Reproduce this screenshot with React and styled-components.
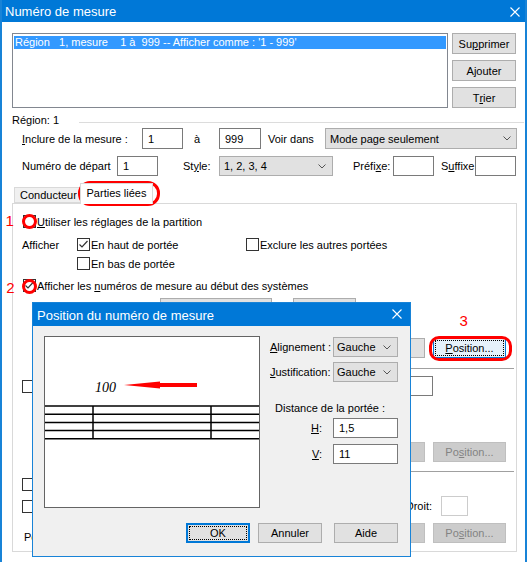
import React from 'react';
import styled, { createGlobalStyle, css } from 'styled-components';

const BLUE = '#0078d7';
const RED = '#ff0000';

const GlobalStyle = createGlobalStyle`
  html, body { margin: 0; padding: 0; background: #fff; }
  body { font-family: "Liberation Sans", Arial, sans-serif; font-size: 11px; color: #000; }
  * { box-sizing: border-box; }
  u { text-decoration-thickness: 1px; text-underline-offset: 1px; }
`;

const Window = styled.div`
  position: relative;
  width: 527px;
  height: 562px;
  border-left: 2px solid #1883d7;
  border-right: 2px solid #1883d7;
  background: #fff;
  overflow: hidden;
`;

const TitleBar = styled.div`
  height: ${p => p.$h}px;
  background: ${BLUE};
  color: #fff;
  font-size: 13px;
  line-height: ${p => p.$h - 2}px;
  padding: 2px 0 0 ${p => p.$pl}px;
  display: flex;
  justify-content: space-between;
  align-items: flex-start;
`;

const CloseBtn = styled.svg`
  margin: ${p => p.$mt}px ${p => p.$mr}px 0 0;
  flex-shrink: 0;
`;

function CloseX({ mt, mr }) {
  return (
    <CloseBtn $mt={mt} $mr={mr} width="10" height="10" viewBox="0 0 10 10">
      <path d="M0.5 0.5 L9.5 9.5 M9.5 0.5 L0.5 9.5" stroke="#fff" strokeWidth="1.1" />
    </CloseBtn>
  );
}

const Body = styled.div`
  padding: 11px 1px 0 10px;
`;

const ListRow = styled.div`
  display: flex;
  gap: 4px;
  height: 75px;
`;

const ListBox = styled.div`
  width: 436px;
  height: 75px;
  border: 1px solid #828790;
  padding: 2px 1px;
`;

const SelectedItem = styled.div`
  background: #3399ff;
  color: #fff;
  height: 13px;
  line-height: 13px;
  padding-left: 1px;
  white-space: pre;
`;

const ButtonColumn = styled.div`
  display: flex;
  flex-direction: column;
  gap: 6px;
`;

const Btn = styled.div`
  position: relative;
  width: ${p => p.$w}px;
  height: ${p => p.$h || 20}px;
  margin-left: ${p => p.$ml || 0}px;
  flex-shrink: 0;
  display: flex;
  align-items: center;
  justify-content: center;
  background: #e1e1e1;
  border: 1px solid #adadad;
  white-space: nowrap;
  ${p => p.$disabled && css`
    background: #cccccc;
    border-color: #bfbfbf;
    color: #838383;
  `}
  ${p => p.$focus && css`
    background: #e5f1fb;
    border-color: ${BLUE};
    &::after {
      content: '';
      position: absolute;
      inset: 1px;
      border: 1px dotted #000;
    }
  `}
  ${p => p.$default && css`
    border: 2px solid ${BLUE};
    &::after {
      content: '';
      position: absolute;
      inset: 1px;
      border: 1px dotted #000;
    }
  `}
`;

const RegionHeader = styled.div`
  margin-top: 5px;
  height: 14px;
  line-height: 14px;
  display: flex;
`;

const HeaderRule = styled.div`
  flex: 1;
  height: 1px;
  margin: 9px 0 0 20px;
  background: #dcdcdc;
`;

const FormRow = styled.div`
  display: flex;
  align-items: center;
  margin-top: ${p => p.$mt}px;
  height: ${p => p.$h}px;
  padding-left: ${p => p.$pl ?? 10}px;
`;

const Label = styled.span`
  display: inline-block;
  width: ${p => (p.$w ? `${p.$w}px` : 'auto')};
  margin-left: ${p => p.$ml || 0}px;
  margin-top: ${p => p.$mt || 0}px;
  flex-shrink: 0;
  white-space: nowrap;
  text-align: ${p => p.$align || 'left'};
  padding-right: ${p => p.$pr || 0}px;
  color: ${p => (p.$disabled ? '#838383' : 'inherit')};
`;

const TextBox = styled.div`
  width: ${p => p.$w}px;
  height: ${p => p.$h || 21}px;
  margin-left: ${p => p.$ml || 0}px;
  flex-shrink: 0;
  background: #fff;
  border: 1px solid ${p => (p.$disabled ? '#cccccc' : '#7a7a7a')};
  padding-left: 5px;
  display: flex;
  align-items: center;
`;

const ComboBox = styled.div`
  width: ${p => p.$w}px;
  height: ${p => p.$h || 21}px;
  flex-shrink: 0;
  background: #e1e1e1;
  border: 1px solid #adadad;
  display: flex;
  align-items: center;
  justify-content: space-between;
  padding: 0 ${p => p.$pr || 6}px 0 ${p => p.$pl || 4}px;
`;

function Combo({ w, h, pl, pr, children }) {
  return (
    <ComboBox $w={w} $h={h} $pl={pl} $pr={pr}>
      <span>{children}</span>
      <svg width="8" height="5" viewBox="0 0 8 5">
        <polyline points="0.5,0.5 4,4 7.5,0.5" fill="none" stroke="#555" strokeWidth="1" />
      </svg>
    </ComboBox>
  );
}

const CheckBox = styled.span`
  display: inline-flex;
  align-items: center;
  justify-content: center;
  width: 13px;
  height: 13px;
  margin-left: ${p => p.$ml || 0}px;
  flex-shrink: 0;
  border: 1px solid #333;
  background: #fff;
`;

function Check({ checked, ml }) {
  return (
    <CheckBox $ml={ml}>
      {checked && (
        <svg width="11" height="11" viewBox="0 0 11 11">
          <polyline points="1.5,5.5 4,8 9.5,2" fill="none" stroke="#333" strokeWidth="1.2" />
        </svg>
      )}
    </CheckBox>
  );
}

const CheckOption = styled.span`
  display: inline-flex;
  align-items: center;
  gap: 1px;
  width: ${p => (p.$w ? `${p.$w}px` : 'auto')};
  margin-left: ${p => p.$ml || 0}px;
  white-space: nowrap;
  flex-shrink: 0;
`;

const TabStrip = styled.div`
  display: flex;
  align-items: flex-end;
  height: 20px;
  margin-top: 7px;
  padding-left: 2px;
`;

const Tab = styled.div`
  position: relative;
  width: ${p => p.$w}px;
  height: ${p => (p.$active ? 21 : 16)}px;
  margin-left: ${p => p.$ml || 0}px;
  margin-bottom: ${p => (p.$active ? -1 : 0)}px;
  z-index: ${p => (p.$active ? 1 : 0)};
  background: ${p => (p.$active ? '#fff' : '#f0f0f0')};
  border: 1px solid #d9d9d9;
  border-bottom: ${p => (p.$active ? 'none' : '1px solid #d9d9d9')};
  display: flex;
  align-items: center;
  justify-content: ${p => (p.$active ? 'center' : 'flex-start')};
  padding-left: ${p => (p.$active ? 0 : 5)}px;
  padding-bottom: ${p => (p.$active ? 2 : 0)}px;
`;

const TabPanel = styled.div`
  width: 505px;
  height: 349px;
  border: 1px solid #d9d9d9;
  padding: 11px 0 0 9px;
`;

const PanelRow = styled.div`
  display: flex;
  align-items: center;
  margin-top: ${p => p.$mt || 0}px;
  height: ${p => p.$h}px;
`;

const RightGroup = styled.div`
  margin-left: auto;
  margin-right: ${p => p.$mr}px;
  display: flex;
  align-items: center;
`;

const Separator = styled.div`
  height: 1px;
  margin: ${p => p.$mt}px 2px 0 18px;
  background: #a0a0a0;
`;

/* overlays */
const Digit = styled.span`
  position: absolute;
  left: ${p => p.$x}px;
  top: ${p => p.$y}px;
  color: ${RED};
  font-size: 15px;
  line-height: 15px;
`;

const Ring = styled.div`
  position: absolute;
  left: ${p => p.$x}px;
  top: ${p => p.$y}px;
  width: ${p => p.$w}px;
  height: ${p => p.$h}px;
  border: 3px solid ${RED};
  border-radius: ${p => p.$r}px;
  pointer-events: none;
`;

/* dialog */
const Dialog = styled.div`
  position: absolute;
  left: 30px;
  top: 302px;
  width: 379px;
  height: 255px;
  border: 1px solid #1883d7;
  background: #f0f0f0;
  z-index: 5;
`;

const DialogBody = styled.div`
  padding: 10px 12px 0 11px;
`;

const DialogMain = styled.div`
  display: flex;
  gap: 10px;
`;

const Preview = styled.div`
  width: 216px;
  height: 172px;
  border: 1px solid #646464;
  background: #fff;
  flex-shrink: 0;
`;

const SideForm = styled.div`
  width: 128px;
  display: flex;
  flex-direction: column;
`;

const SideRow = styled.div`
  display: flex;
  align-items: center;
  margin-top: ${p => p.$mt}px;
  height: ${p => p.$h}px;
  padding-left: ${p => p.$pl || 0}px;
`;

const DialogButtons = styled.div`
  display: flex;
  justify-content: flex-end;
  margin-top: 15px;
  height: 20px;
`;

function StaffPreview() {
  const ys = [69, 77.3, 85.4, 93.6, 101.7];
  return (
    <svg width="214" height="170" viewBox="0 0 214 170" style={{ display: 'block' }}>
      <text x="50" y="55" fontFamily="Liberation Serif, serif" fontStyle="italic" fontSize="14">100</text>
      <polygon points="79,48 115,44.5 115,46 152,46 152,50 115,50 115,51.5" fill={RED} />
      {ys.map(y => (
        <line key={y} x1="0" y1={y} x2="214" y2={y} stroke="#000" strokeWidth="1.5" />
      ))}
      <line x1="48" y1="69" x2="48" y2="101.7" stroke="#000" strokeWidth="1.5" />
      <line x1="166" y1="69" x2="166" y2="101.7" stroke="#000" strokeWidth="1.5" />
    </svg>
  );
}

export default function App() {
  return (
    <>
      <GlobalStyle />
      <Window>
        <TitleBar $h={22} $pl={3}>
          <span>Numéro de mesure</span>
          <CloseX mt={5} mr={5} />
        </TitleBar>
        <Body>
          <ListRow>
            <ListBox>
              <SelectedItem>{"Région   1, mesure    1 à  999 -- Afficher comme : '1 - 999'"}</SelectedItem>
            </ListBox>
            <ButtonColumn>
              <Btn $w={64} $h={21}>Su<u>p</u>primer</Btn>
              <Btn $w={64} $h={21}>A<u>j</u>outer</Btn>
              <Btn $w={64} $h={21}>T<u>r</u>ier</Btn>
            </ButtonColumn>
          </ListRow>

          <RegionHeader>
            <span>Région: 1</span>
            <HeaderRule />
          </RegionHeader>

          <FormRow $mt={1} $h={21}>
            <Label $w={120}><u>I</u>nclure de la mesure :</Label>
            <TextBox $w={41}>1</TextBox>
            <Label $w={25} $ml={11}>à</Label>
            <TextBox $w={42}>999</TextBox>
            <Label $w={57} $ml={7}>Voir dans</Label>
            <Combo w={192} pr={5}>Mode page seulement</Combo>
          </FormRow>

          <FormRow $mt={7} $h={20}>
            <Label $w={95}>Numéro de départ</Label>
            <TextBox $w={41} $h={20}>1</TextBox>
            <Label $w={36} $ml={25}>St<u>y</u>le:</Label>
            <Combo w={114} h={20}>1, 2, 3, 4</Combo>
            <Label $w={40} $ml={20}>Préfi<u>x</u>e:</Label>
            <TextBox $w={41} $h={20} />
            <Label $w={34} $ml={7}>S<u>u</u>ffixe</Label>
            <TextBox $w={41} $h={20} />
          </FormRow>

          <TabStrip>
            <Tab $w={67}>Conducteur</Tab>
            <Tab $w={73} $ml={-1} $active>Parties liées</Tab>
          </TabStrip>

          <TabPanel>
            <PanelRow $h={13}>
              <CheckOption $ml={1}>
                <Check />
                <span><u>U</u>tiliser les réglages de la partition</span>
              </CheckOption>
            </PanelRow>
            <PanelRow $h={13} $mt={10}>
              <Label $w={55}>Afficher</Label>
              <CheckOption $w={169}>
                <Check checked />
                <span>En haut de portée</span>
              </CheckOption>
              <CheckOption>
                <Check />
                <span>Exclure les autres portées</span>
              </CheckOption>
            </PanelRow>
            <PanelRow $h={13} $mt={6}>
              <CheckOption $ml={55}>
                <Check />
                <span>En bas de portée</span>
              </CheckOption>
            </PanelRow>
            <PanelRow $h={13} $mt={9}>
              <CheckOption $ml={1}>
                <Check checked />
                <span>Afficher les <u>n</u>uméros de mesure au début des systèmes</span>
              </CheckOption>
            </PanelRow>
            <PanelRow $h={20} $mt={6}>
              <Btn $w={112} $ml={138} />
              <Btn $w={63} $ml={21} />
            </PanelRow>
            <PanelRow $h={20} $mt={20}>
              <RightGroup $mr={10}>
                <Btn $w={75} />
                <Btn $w={73} $ml={8} $focus><u>P</u>osition...</Btn>
              </RightGroup>
            </PanelRow>
            <Separator $mt={10} />
            <PanelRow $h={20} $mt={7}>
              <Check />
              <RightGroup $mr={83}>
                <TextBox $w={60} $h={20} />
              </RightGroup>
            </PanelRow>
            <PanelRow $h={20} $mt={46}>
              <RightGroup $mr={10}>
                <Btn $w={75} $disabled />
                <Btn $w={73} $ml={8} $disabled>Po<u>s</u>ition...</Btn>
              </RightGroup>
            </PanelRow>
            <Separator $mt={9} />
            <PanelRow $h={13} $mt={6}>
              <Check />
            </PanelRow>
            <PanelRow $h={20} $mt={5}>
              <Check />
              <RightGroup $mr={48}>
                <Label>Droit:</Label>
                <TextBox $w={27} $h={20} $ml={9} $disabled />
              </RightGroup>
            </PanelRow>
            <PanelRow $h={20} $mt={7}>
              <Label $ml={2} $mt={8}>Po</Label>
              <RightGroup $mr={10}>
                <Btn $w={75} $disabled />
                <Btn $w={73} $ml={8} $disabled>Po<u>s</u>ition...</Btn>
              </RightGroup>
            </PanelRow>
          </TabPanel>
        </Body>

        <Digit $x={3.5} $y={213}>1</Digit>
        <Digit $x={4.3} $y={280}>2</Digit>
        <Digit $x={457.4} $y={313}>3</Digit>
        <Ring $x={19.5} $y={214} $w={15} $h={15} $r={8} />
        <Ring $x={19.5} $y={279} $w={15} $h={15} $r={8} />
        <Ring $x={76} $y={181} $w={82} $h={25} $r={12} />
        <Ring $x={427} $y={336} $w={83} $h={25} $r={10} />

        <Dialog>
          <TitleBar $h={23} $pl={4}>
            <span>Position du numéro de mesure</span>
            <CloseX mt={4} mr={8} />
          </TitleBar>
          <DialogBody>
            <DialogMain>
              <Preview>
                <StaffPreview />
              </Preview>
              <SideForm>
                <SideRow $mt={1} $h={20}>
                  <Label $w={63}><u>A</u>lignement :</Label>
                  <Combo w={65} h={20} pl={3}>Gauche</Combo>
                </SideRow>
                <SideRow $mt={5} $h={20}>
                  <Label $w={63}><u>J</u>ustification:</Label>
                  <Combo w={65} h={20} pl={3}>Gauche</Combo>
                </SideRow>
                <SideRow $mt={19} $h={14} $pl={5}>
                  <Label>Distance de la portée :</Label>
                </SideRow>
                <SideRow $mt={3} $h={20}>
                  <Label $w={63} $align="right" $pr={11}><u>H</u>:</Label>
                  <TextBox $w={65} $h={20}>1,5</TextBox>
                </SideRow>
                <SideRow $mt={6} $h={20}>
                  <Label $w={63} $align="right" $pr={11}><u>V</u>:</Label>
                  <TextBox $w={65} $h={20}>11</TextBox>
                </SideRow>
              </SideForm>
            </DialogMain>
            <DialogButtons>
              <Btn $w={64} $default>OK</Btn>
              <Btn $w={64} $ml={8}>Annuler</Btn>
              <Btn $w={64} $ml={12}>Aide</Btn>
            </DialogButtons>
          </DialogBody>
        </Dialog>
      </Window>
    </>
  );
}
